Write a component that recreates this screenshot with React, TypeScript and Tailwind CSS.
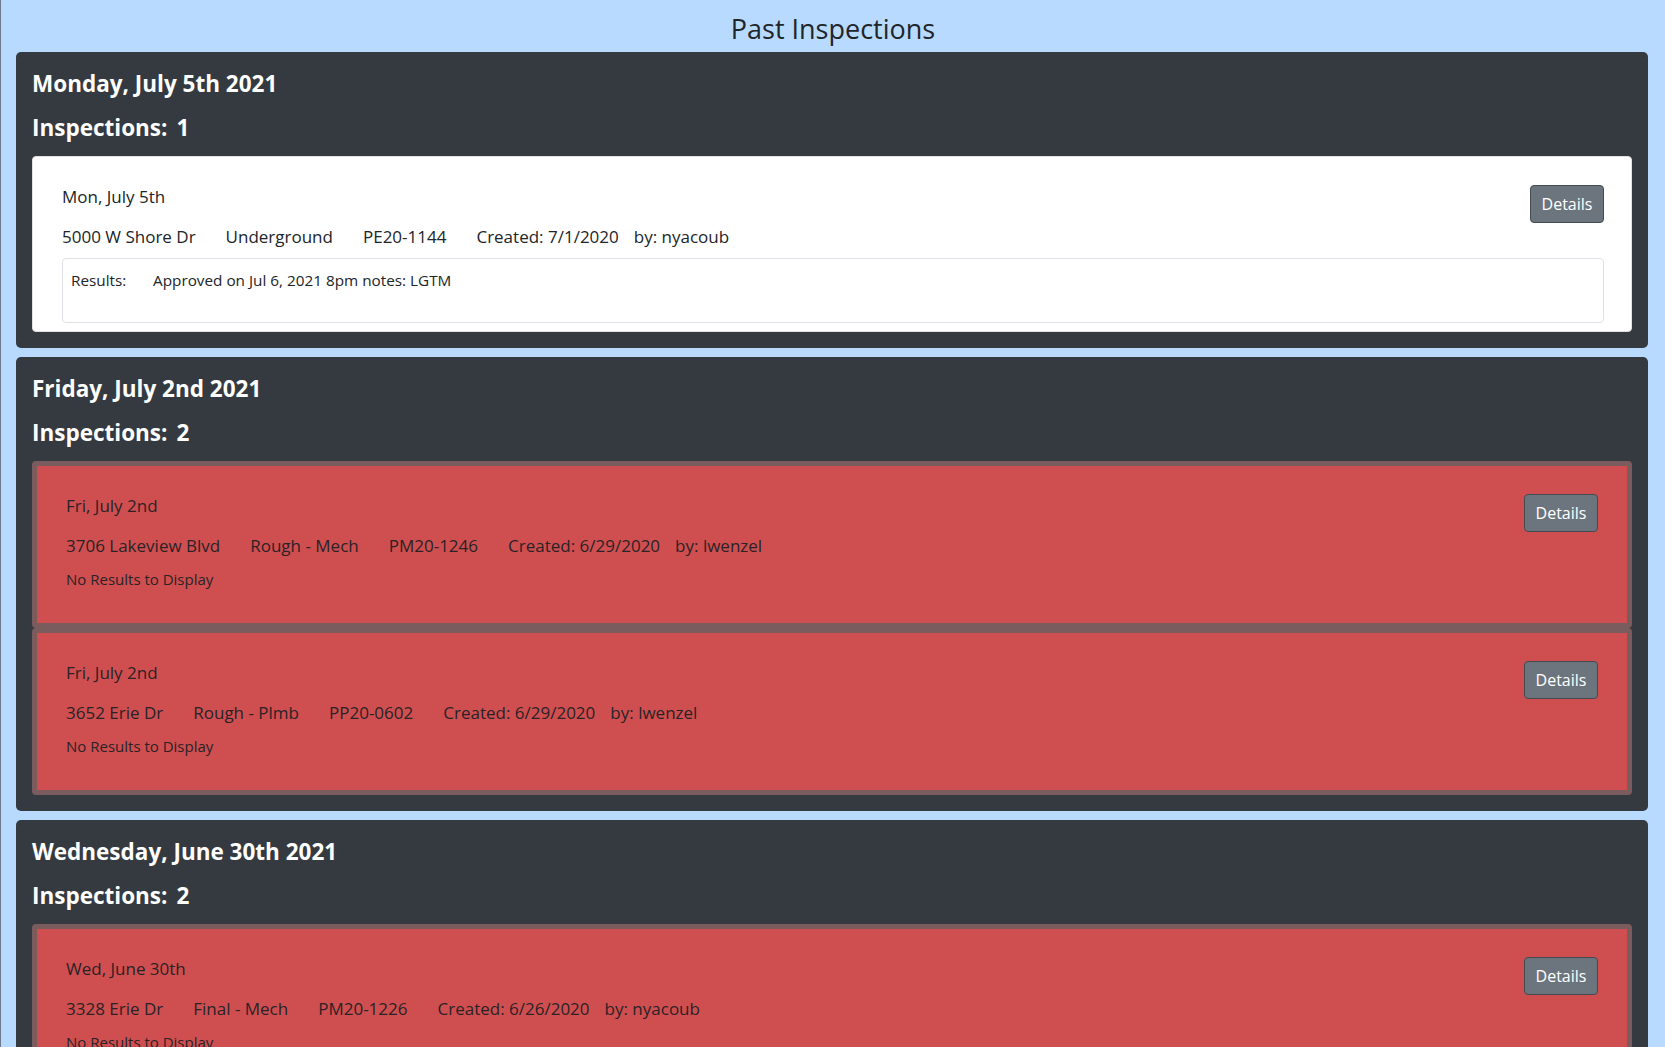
import React from "react";

type Card = {
  day: string;
  addr: string;
  type: string;
  permit: string;
  created: string;
  by: string;
  result?: string;
};

type Panel = { date: string; count: number; cards: Card[] };

const panels: Panel[] = [
  {
    date: "Monday, July 5th 2021",
    count: 1,
    cards: [
      {
        day: "Mon, July 5th",
        addr: "5000 W Shore Dr",
        type: "Underground",
        permit: "PE20-1144",
        created: "7/1/2020",
        by: "nyacoub",
        result: "Approved on Jul 6, 2021 8pm notes: LGTM",
      },
    ],
  },
  {
    date: "Friday, July 2nd 2021",
    count: 2,
    cards: [
      {
        day: "Fri, July 2nd",
        addr: "3706 Lakeview Blvd",
        type: "Rough - Mech",
        permit: "PM20-1246",
        created: "6/29/2020",
        by: "lwenzel",
      },
      {
        day: "Fri, July 2nd",
        addr: "3652 Erie Dr",
        type: "Rough - Plmb",
        permit: "PP20-0602",
        created: "6/29/2020",
        by: "lwenzel",
      },
    ],
  },
  {
    date: "Wednesday, June 30th 2021",
    count: 2,
    cards: [
      {
        day: "Wed, June 30th",
        addr: "3328 Erie Dr",
        type: "Final - Mech",
        permit: "PM20-1226",
        created: "6/26/2020",
        by: "nyacoub",
      },
      {
        day: "Wed, June 30th",
        addr: "3330 Erie Dr",
        type: "Final - Plmb",
        permit: "PP20-0581",
        created: "6/26/2020",
        by: "nyacoub",
      },
    ],
  },
];

function DetailsButton() {
  return (
    <button className="h-[38px] w-[74px] shrink-0 rounded-[4px] border border-[#454b52] bg-[#6c757d] text-[16px] leading-6 text-white">
      Details
    </button>
  );
}

function InfoRow({ c }: { c: Card }) {
  return (
    <div className="flex h-6 items-center whitespace-nowrap text-[17px] leading-6">
      <span className="mr-[30px]">{c.addr}</span>
      <span className="mr-[30px]">{c.type}</span>
      <span className="mr-[30px]">{c.permit}</span>
      <span className="mr-[15px]">Created: {c.created}</span>
      <span>by: {c.by}</span>
    </div>
  );
}

function ApprovedCard({ c }: { c: Card }) {
  return (
    <div className="rounded-[4px] border border-[#e3e3e3] bg-white pl-[29px] pr-[27px] pt-[28px] pb-[8px] text-[#212529]">
      <div className="flex items-start justify-between">
        <div className="flex flex-col">
          <div className="h-6 text-[17px] leading-6">{c.day}</div>
          <div className="mt-4">
            <InfoRow c={c} />
          </div>
        </div>
        <DetailsButton />
      </div>
      <div className="mt-[9px] h-[65px] rounded-[4px] border border-[#dee2e6] px-2 pt-[11px] text-[15.3px] leading-[21px]">
        <span className="inline-block w-[82px]">Results:</span>
        <span>{c.result}</span>
      </div>
    </div>
  );
}

function FailedCard({ c }: { c: Card }) {
  return (
    <div className="rounded-[4px] border-[5px] border-[#7a5c5e] bg-[#cf4f50] pl-[29px] pr-[29px] pt-[28px] pb-[33px] text-[#2a2226]">
      <div className="flex items-start justify-between">
        <div className="flex flex-col">
          <div className="h-6 text-[17px] leading-6">{c.day}</div>
          <div className="mt-4">
            <InfoRow c={c} />
          </div>
          <div className="mt-[11px] h-[21px] text-[15px] leading-[21px]">No Results to Display</div>
        </div>
        <DetailsButton />
      </div>
    </div>
  );
}

export default function App() {
  return (
    <div className="h-screen overflow-hidden border-l border-[#6b7b8c] bg-[#b8daff] font-['Open_Sans',sans-serif] text-[#212529]">
      <div className="h-[52px] pt-[12px] text-center text-[27px] leading-[34px]">Past Inspections</div>
      <div className="flex flex-col gap-[9px] pl-[15px] pr-[17px]">
        {panels.map((p) => (
          <div key={p.date} className="rounded-[5px] bg-[#343a40] px-4 pt-[17px] pb-4">
            <h4 className="mb-[15px] h-[29px] text-[22.5px] font-bold leading-[29px] text-white">{p.date}</h4>
            <h4 className="mb-[14px] flex h-[29px] text-[22.5px] font-bold leading-[29px] text-white">
              <span>Inspections:</span>
              <span className="ml-[9px]">{p.count}</span>
            </h4>
            <div className="flex flex-col">
              {p.cards.map((c, i) =>
                c.result ? <ApprovedCard key={i} c={c} /> : <FailedCard key={i} c={c} />
              )}
            </div>
          </div>
        ))}
      </div>
    </div>
  );
}
